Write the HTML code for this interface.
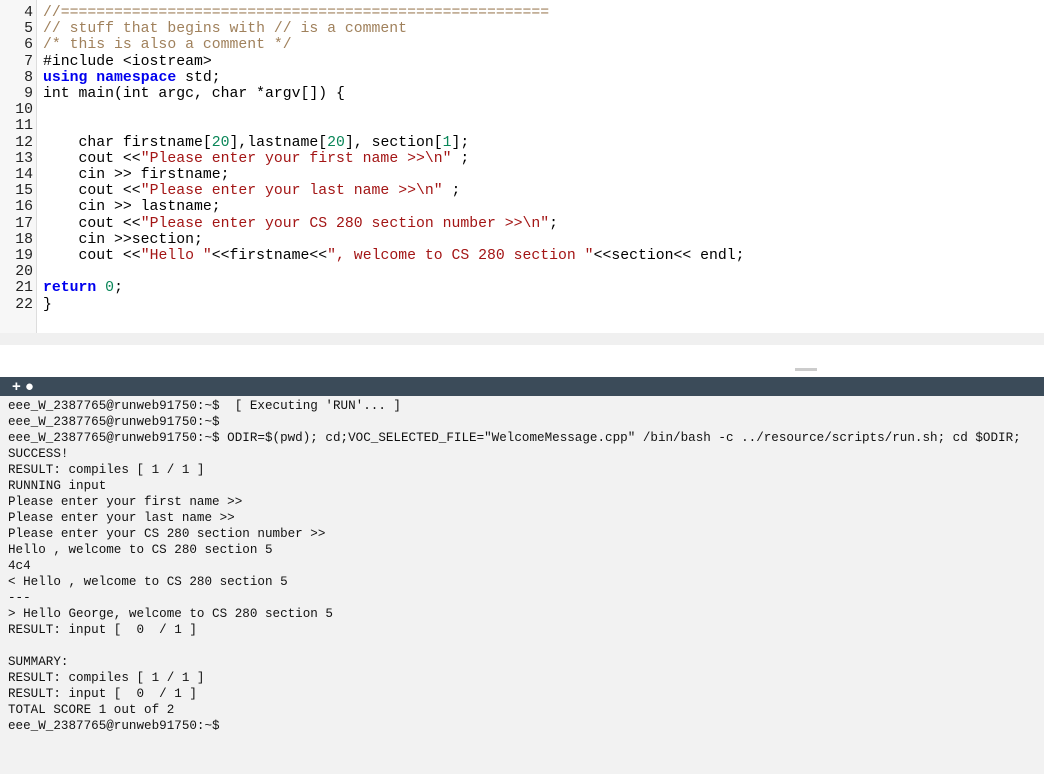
<!DOCTYPE html>
<html><head><meta charset="utf-8"><style>
*{margin:0;padding:0;box-sizing:border-box}
body{width:1044px;height:774px;overflow:hidden;background:#fff;position:relative;font-family:"Liberation Mono",monospace}
#ed{position:absolute;left:0;top:0;width:1044px;height:333px;background:#fff;overflow:hidden}
#gut{position:absolute;left:0;top:0;width:37px;height:333px;background:#f7f7f7;border-right:1px solid #ddd}
.ln{position:absolute;left:0;width:33px;text-align:right;font-size:14.8px;line-height:16.2px;color:#222;white-space:pre}
.cl{position:absolute;left:43px;font-size:14.8px;line-height:16.2px;color:#000;white-space:pre}
.c{color:#a0815c}.k{color:#0000ee;font-weight:bold}.n{color:#098658}.s{color:#a31515}
#sb{position:absolute;left:0;top:333px;width:1044px;height:12px;background:#f0f0f0}
#hd{position:absolute;left:795px;top:368px;width:22px;height:3px;background:#ccc}
#bar{position:absolute;left:0;top:377px;width:1044px;height:19px;background:#3b4b59;color:#fff;font:bold 15px "Liberation Sans",sans-serif;padding-left:12px;line-height:19px}
#term{position:absolute;left:0;top:396px;width:1044px;height:378px;background:#f2f2f2;padding:2px 0 0 8px;font-size:12.6px;line-height:16px;color:#111;white-space:pre}
</style></head><body>
<div id="ed"><div id="gut"></div>
<div class="ln" style="top:5px">4
5
6
7
8
9
10
11
12
13
14
15
16
17
18
19
20
21
22</div>
<div class="cl" style="top:5px"><span class="c">//=======================================================</span>
<span class="c">// stuff that begins with // is a comment</span>
<span class="c">/* this is also a comment */</span>
#include &lt;iostream&gt;
<span class="k">using</span> <span class="k">namespace</span> std;
int main(int argc, char *argv[]) {


    char firstname[<span class="n">20</span>],lastname[<span class="n">20</span>], section[<span class="n">1</span>];
    cout &lt;&lt;<span class="s">"Please enter your first name &gt;&gt;\n"</span> ;
    cin &gt;&gt; firstname;
    cout &lt;&lt;<span class="s">"Please enter your last name &gt;&gt;\n"</span> ;
    cin &gt;&gt; lastname;
    cout &lt;&lt;<span class="s">"Please enter your CS 280 section number &gt;&gt;\n"</span>;
    cin &gt;&gt;section;
    cout &lt;&lt;<span class="s">"Hello "</span>&lt;&lt;firstname&lt;&lt;<span class="s">", welcome to CS 280 section "</span>&lt;&lt;section&lt;&lt; endl;

<span class="k">return</span> <span class="n">0</span>;
}</div>
</div>
<div id="sb"></div>
<div id="hd"></div>
<div id="bar">+ &#9679;</div>
<div id="term">eee_W_2387765@runweb91750:~$  [ Executing 'RUN'... ]
eee_W_2387765@runweb91750:~$
eee_W_2387765@runweb91750:~$ ODIR=$(pwd); cd;VOC_SELECTED_FILE="WelcomeMessage.cpp" /bin/bash -c ../resource/scripts/run.sh; cd $ODIR;
SUCCESS!
RESULT: compiles [ 1 / 1 ]
RUNNING input
Please enter your first name &gt;&gt;
Please enter your last name &gt;&gt;
Please enter your CS 280 section number &gt;&gt;
Hello , welcome to CS 280 section 5
4c4
&lt; Hello , welcome to CS 280 section 5
---
&gt; Hello George, welcome to CS 280 section 5
RESULT: input [  0  / 1 ]

SUMMARY:
RESULT: compiles [ 1 / 1 ]
RESULT: input [  0  / 1 ]
TOTAL SCORE 1 out of 2
eee_W_2387765@runweb91750:~$</div>
</body></html>
